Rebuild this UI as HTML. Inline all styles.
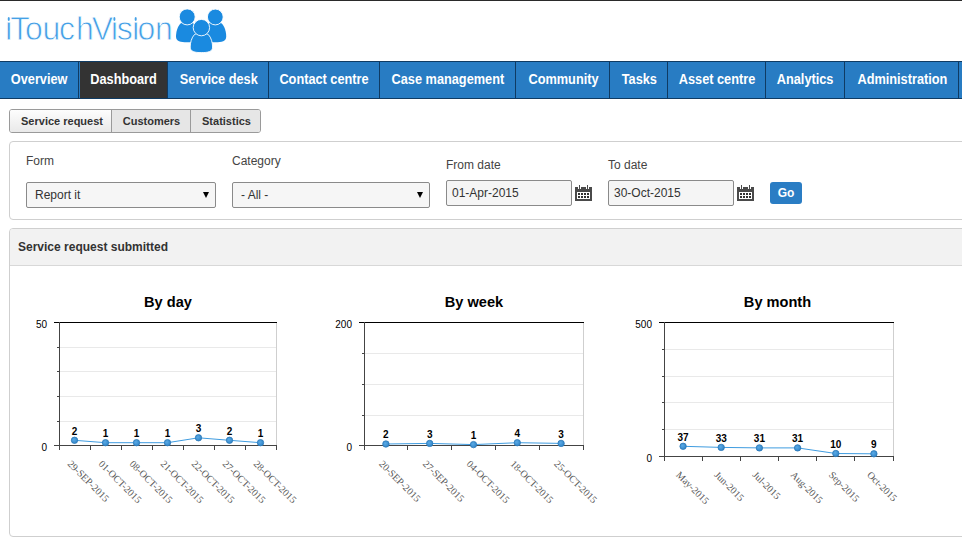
<!DOCTYPE html>
<html><head><meta charset="utf-8">
<style>
*{box-sizing:border-box;margin:0;padding:0}
html,body{width:962px;height:538px;overflow:hidden;background:#fff;font-family:"Liberation Sans",sans-serif;color:#333}
.abs{position:absolute}
#topline{left:0;top:0;width:962px;height:1px;background:#2a2a2a}
#nav{left:0;top:61px;width:962px;height:38px;background:#287cc3;border-top:1px solid #0f3b63;border-bottom:1px solid #0f3b63}
#nav .it{position:absolute;top:0;height:36px;line-height:35px;color:#fff;font-weight:bold;font-size:13px;text-align:center;border-right:1px solid #0f3b63;padding-left:1px}
#nav .act{background:#333}
#nav .it span{display:inline-block;font-size:14px;transform:scaleX(0.91);white-space:nowrap}
#tabs{left:9px;top:109px;width:252px;height:24px;border:1px solid #9a9a9a;border-radius:3px;overflow:hidden;font-size:11px;font-weight:bold;color:#333}
#tabs div{position:absolute;top:0;height:22px;line-height:22px;text-align:center;padding-left:1px}
#panel1{left:9px;top:141px;width:970px;height:79px;border:1px solid #cfcfcf;border-radius:4px}
.lbl{font-size:12px;color:#444}
.sel{height:26px;border:1px solid #8a8a8a;border-radius:2px;background:#f6f6f6;font-size:12px;color:#333;line-height:24px;padding-left:8px}
.arr{position:absolute;right:6px;top:9px;width:0;height:0;border-left:3.5px solid transparent;border-right:3.5px solid transparent;border-top:6px solid #000}
.inp{height:26px;border:1px solid #8a8a8a;border-radius:2px;background:#f5f5f5;font-size:12px;color:#333;line-height:24px;padding-left:5px}
#go{left:770px;top:182px;width:32px;height:22px;background:#2a7dc4;border-radius:3px;color:#fff;font-weight:bold;font-size:12px;line-height:23px;text-align:center}
#panel2{left:9px;top:228px;width:970px;height:309px;border:1px solid #cfcfcf;border-radius:4px;overflow:hidden}
#ph{left:0;top:0;width:100%;height:37px;background:#f2f2f2;border-bottom:1px solid #d8d8d8}
#pht{left:8px;top:11px;font-size:12px;font-weight:bold;color:#333;line-height:14px}
svg text{font-family:"Liberation Sans",sans-serif}
</style></head><body>
<div id="topline" class="abs"></div>
<svg class="abs" style="left:0;top:0" width="172" height="50"><text transform="translate(0,39.8) scale(1,1.045)" x="4.35 10.2 25.1 42.4 59.1 76.05 91.75 110.0 116.7 131.3 137.4 155" y="0" font-size="32" fill="#45a0e6" stroke="#fff" stroke-width="0.75" style="font-family:'Liberation Sans'">&#305;TouchV&#305;s&#305;on</text><g fill="#45a0e6"><ellipse cx="8.75" cy="19" rx="1.05" ry="2"/><ellipse cx="114.4" cy="19" rx="1.05" ry="2"/><ellipse cx="135.7" cy="19" rx="1.05" ry="2"/></g></svg>
<svg class="abs" style="left:170px;top:0" width="64" height="60" viewBox="170 0 64 60">
  <g fill="#1a8ae0" stroke="#fff" stroke-width="0.9">
    <path stroke="none" d="M180.5 23.5 Q187 20 193.5 23.5 C196.5 26.5 198.5 32 198.5 36 C198.5 41 194 42.2 187 42.2 C180.5 42.2 176 41.5 176 36.5 C176 32 177.5 26.5 180.5 23.5Z"/>
    <path stroke="none" d="M208.8 23.5 Q215.3 20 221.8 23.5 C224.8 26.5 226.2 32 226.2 36.5 C226.2 41.5 221.8 42.2 215.3 42.2 C208.5 42.2 204 41 204 36 C204 32 205.8 26.5 208.8 23.5Z"/>
    <circle cx="187.2" cy="16.9" r="8"/>
    <circle cx="215.3" cy="17" r="7.9"/>
    <path d="M194.5 34.5 Q201.4 30.5 208.3 34.5 C211.3 37.5 212.6 43 212.6 47 C212.6 51.8 208 52.6 201.4 52.6 C194.8 52.6 190.2 51.8 190.2 47 C190.2 43 191.5 37.5 194.5 34.5Z"/>
    <circle cx="201.4" cy="27.6" r="8.2"/>
  </g>
</svg>
<div id="nav" class="abs">
  <div class="it" style="left:0;width:79px"><span>Overview</span></div>
  <div class="it act" style="left:80px;width:88px"><span>Dashboard</span></div>
  <div class="it" style="left:168px;width:101px"><span>Service desk</span></div>
  <div class="it" style="left:269px;width:111px"><span>Contact centre</span></div>
  <div class="it" style="left:380px;width:136px"><span>Case management</span></div>
  <div class="it" style="left:516px;width:94px"><span>Community</span></div>
  <div class="it" style="left:610px;width:58px"><span>Tasks</span></div>
  <div class="it" style="left:668px;width:98px"><span>Asset centre</span></div>
  <div class="it" style="left:766px;width:79px"><span>Analytics</span></div>
  <div class="it" style="left:845px;width:114px"><span>Administration</span></div>
</div>
<div id="tabs" class="abs">
  <div style="left:0;width:102px;background:linear-gradient(#fdfdfd,#e9e9e9);border-right:1px solid #9a9a9a;padding-left:3px">Service request</div>
  <div style="left:102px;width:79px;background:#e6e6e6;border-right:1px solid #9a9a9a">Customers</div>
  <div style="left:181px;width:70px;background:#e6e6e6">Statistics</div>
</div>
<div id="panel1" class="abs"></div>
<div class="abs lbl" style="left:26px;top:154px">Form</div>
<div class="abs lbl" style="left:232px;top:154px">Category</div>
<div class="abs lbl" style="left:446px;top:158px">From date</div>
<div class="abs lbl" style="left:608px;top:158px">To date</div>
<div class="abs sel" style="left:26px;top:182px;width:190px">Report it<span class="arr"></span></div>
<div class="abs sel" style="left:232px;top:182px;width:198px">- All -<span class="arr"></span></div>
<div class="abs inp" style="left:446px;top:180px;width:126px">01-Apr-2015</div>
<div class="abs inp" style="left:608px;top:180px;width:126px">30-Oct-2015</div>
<svg class="abs" style="left:575px;top:184px" width="18" height="17" viewBox="0 0 18 17">
    <rect x="0" y="3" width="17" height="14" fill="#4a4a4a"/>
    <rect x="2" y="8" width="13" height="7" fill="#fff"/>
    <rect x="3" y="0" width="3" height="5" fill="#fff"/><rect x="4" y="1" width="1" height="4" fill="#4a4a4a"/>
    <rect x="11" y="0" width="3" height="5" fill="#fff"/><rect x="12" y="1" width="1" height="4" fill="#4a4a4a"/>
    <g fill="#333"><rect x="3" y="9" width="2" height="2"/><rect x="6" y="9" width="2" height="2"/><rect x="9" y="9" width="2" height="2"/><rect x="12" y="9" width="2" height="2"/>
    <rect x="3" y="12" width="2" height="2"/><rect x="6" y="12" width="2" height="2"/><rect x="9" y="12" width="2" height="2"/><rect x="12" y="12" width="2" height="2"/></g></svg>
<svg class="abs" style="left:737px;top:184px" width="18" height="17" viewBox="0 0 18 17">
    <rect x="0" y="3" width="17" height="14" fill="#4a4a4a"/>
    <rect x="2" y="8" width="13" height="7" fill="#fff"/>
    <rect x="3" y="0" width="3" height="5" fill="#fff"/><rect x="4" y="1" width="1" height="4" fill="#4a4a4a"/>
    <rect x="11" y="0" width="3" height="5" fill="#fff"/><rect x="12" y="1" width="1" height="4" fill="#4a4a4a"/>
    <g fill="#333"><rect x="3" y="9" width="2" height="2"/><rect x="6" y="9" width="2" height="2"/><rect x="9" y="9" width="2" height="2"/><rect x="12" y="9" width="2" height="2"/>
    <rect x="3" y="12" width="2" height="2"/><rect x="6" y="12" width="2" height="2"/><rect x="9" y="12" width="2" height="2"/><rect x="12" y="12" width="2" height="2"/></g></svg>

<div id="go" class="abs">Go</div>
<div id="panel2" class="abs">
  <div id="ph" class="abs"><div id="pht" class="abs">Service request submitted</div></div>
</div>
<svg id="charts" class="abs" style="left:0;top:0" width="962" height="538">
<defs><radialGradient id="pg" cx="0.4" cy="0.4" r="0.6"><stop offset="0" stop-color="#5aaae6"/><stop offset="1" stop-color="#3386c8"/></radialGradient></defs>
<text x="168.0" y="306.8" text-anchor="middle" font-size="14.6" font-weight="bold" fill="#000">By day</text>
<line x1="60" y1="347.5" x2="276" y2="347.5" stroke="#e9e9e9" stroke-width="1"/>
<line x1="57" y1="347.5" x2="59" y2="347.5" stroke="#444" stroke-width="1"/>
<line x1="60" y1="371.5" x2="276" y2="371.5" stroke="#e9e9e9" stroke-width="1"/>
<line x1="57" y1="371.5" x2="59" y2="371.5" stroke="#444" stroke-width="1"/>
<line x1="60" y1="396.5" x2="276" y2="396.5" stroke="#e9e9e9" stroke-width="1"/>
<line x1="57" y1="396.5" x2="59" y2="396.5" stroke="#444" stroke-width="1"/>
<line x1="60" y1="421.5" x2="276" y2="421.5" stroke="#e9e9e9" stroke-width="1"/>
<line x1="57" y1="421.5" x2="59" y2="421.5" stroke="#444" stroke-width="1"/>
<line x1="276.5" y1="323" x2="276.5" y2="445" stroke="#cfcfcf" stroke-width="1"/>
<line x1="54" y1="322.5" x2="277" y2="322.5" stroke="#000" stroke-width="1"/>
<line x1="59.5" y1="322" x2="59.5" y2="450" stroke="#444" stroke-width="1"/>
<line x1="54" y1="445.5" x2="277" y2="445.5" stroke="#444" stroke-width="1"/>
<line x1="90.5" y1="445" x2="90.5" y2="450" stroke="#444" stroke-width="1"/>
<line x1="121.5" y1="445" x2="121.5" y2="450" stroke="#444" stroke-width="1"/>
<line x1="152.5" y1="445" x2="152.5" y2="450" stroke="#444" stroke-width="1"/>
<line x1="183.5" y1="445" x2="183.5" y2="450" stroke="#444" stroke-width="1"/>
<line x1="214.5" y1="445" x2="214.5" y2="450" stroke="#444" stroke-width="1"/>
<line x1="245.5" y1="445" x2="245.5" y2="450" stroke="#444" stroke-width="1"/>
<line x1="276.5" y1="445" x2="276.5" y2="450" stroke="#444" stroke-width="1"/>
<text x="47" y="328" text-anchor="end" font-size="10" fill="#000">50</text>
<text x="47" y="450.5" text-anchor="end" font-size="10" fill="#000">0</text>
<polyline points="74.5,440.3 105.5,442.7 136.5,442.7 167.5,442.7 198.5,437.8 229.5,440.3 260.5,442.7" fill="none" stroke="#3f9ce0" stroke-width="1"/>
<circle cx="74.5" cy="440.3" r="3.2" fill="url(#pg)" stroke="#2c78b8" stroke-width="0.8"/>
<text x="74.5" y="434.7" text-anchor="middle" font-size="10" font-weight="bold" fill="#000">2</text>
<circle cx="105.5" cy="442.7" r="3.2" fill="url(#pg)" stroke="#2c78b8" stroke-width="0.8"/>
<text x="105.5" y="437.1" text-anchor="middle" font-size="10" font-weight="bold" fill="#000">1</text>
<circle cx="136.5" cy="442.7" r="3.2" fill="url(#pg)" stroke="#2c78b8" stroke-width="0.8"/>
<text x="136.5" y="437.1" text-anchor="middle" font-size="10" font-weight="bold" fill="#000">1</text>
<circle cx="167.5" cy="442.7" r="3.2" fill="url(#pg)" stroke="#2c78b8" stroke-width="0.8"/>
<text x="167.5" y="437.1" text-anchor="middle" font-size="10" font-weight="bold" fill="#000">1</text>
<circle cx="198.5" cy="437.8" r="3.2" fill="url(#pg)" stroke="#2c78b8" stroke-width="0.8"/>
<text x="198.5" y="432.2" text-anchor="middle" font-size="10" font-weight="bold" fill="#000">3</text>
<circle cx="229.5" cy="440.3" r="3.2" fill="url(#pg)" stroke="#2c78b8" stroke-width="0.8"/>
<text x="229.5" y="434.7" text-anchor="middle" font-size="10" font-weight="bold" fill="#000">2</text>
<circle cx="260.5" cy="442.7" r="3.2" fill="url(#pg)" stroke="#2c78b8" stroke-width="0.8"/>
<text x="260.5" y="437.1" text-anchor="middle" font-size="10" font-weight="bold" fill="#000">1</text>
<text transform="translate(67.0,464.4) rotate(45)" font-family="Liberation Serif" style="font-family:'Liberation Serif',serif" font-size="10" fill="#5a5a5a">29-SEP-2015</text>
<text transform="translate(98.0,464.4) rotate(45)" font-family="Liberation Serif" style="font-family:'Liberation Serif',serif" font-size="10" fill="#5a5a5a">01-OCT-2015</text>
<text transform="translate(129.0,464.4) rotate(45)" font-family="Liberation Serif" style="font-family:'Liberation Serif',serif" font-size="10" fill="#5a5a5a">08-OCT-2015</text>
<text transform="translate(160.0,464.4) rotate(45)" font-family="Liberation Serif" style="font-family:'Liberation Serif',serif" font-size="10" fill="#5a5a5a">21-OCT-2015</text>
<text transform="translate(191.0,464.4) rotate(45)" font-family="Liberation Serif" style="font-family:'Liberation Serif',serif" font-size="10" fill="#5a5a5a">22-OCT-2015</text>
<text transform="translate(222.0,464.4) rotate(45)" font-family="Liberation Serif" style="font-family:'Liberation Serif',serif" font-size="10" fill="#5a5a5a">27-OCT-2015</text>
<text transform="translate(253.0,464.4) rotate(45)" font-family="Liberation Serif" style="font-family:'Liberation Serif',serif" font-size="10" fill="#5a5a5a">28-OCT-2015</text>
<text x="474.0" y="306.8" text-anchor="middle" font-size="14.6" font-weight="bold" fill="#000">By week</text>
<line x1="365" y1="353.5" x2="583" y2="353.5" stroke="#e9e9e9" stroke-width="1"/>
<line x1="362" y1="353.5" x2="364" y2="353.5" stroke="#444" stroke-width="1"/>
<line x1="365" y1="384.5" x2="583" y2="384.5" stroke="#e9e9e9" stroke-width="1"/>
<line x1="362" y1="384.5" x2="364" y2="384.5" stroke="#444" stroke-width="1"/>
<line x1="365" y1="415.5" x2="583" y2="415.5" stroke="#e9e9e9" stroke-width="1"/>
<line x1="362" y1="415.5" x2="364" y2="415.5" stroke="#444" stroke-width="1"/>
<line x1="583.5" y1="323" x2="583.5" y2="445" stroke="#cfcfcf" stroke-width="1"/>
<line x1="359" y1="322.5" x2="584" y2="322.5" stroke="#000" stroke-width="1"/>
<line x1="364.5" y1="322" x2="364.5" y2="450" stroke="#444" stroke-width="1"/>
<line x1="359" y1="445.5" x2="584" y2="445.5" stroke="#444" stroke-width="1"/>
<line x1="407.5" y1="445" x2="407.5" y2="450" stroke="#444" stroke-width="1"/>
<line x1="451.5" y1="445" x2="451.5" y2="450" stroke="#444" stroke-width="1"/>
<line x1="495.5" y1="445" x2="495.5" y2="450" stroke="#444" stroke-width="1"/>
<line x1="539.5" y1="445" x2="539.5" y2="450" stroke="#444" stroke-width="1"/>
<line x1="583.5" y1="445" x2="583.5" y2="450" stroke="#444" stroke-width="1"/>
<text x="352" y="328" text-anchor="end" font-size="10" fill="#000">200</text>
<text x="352" y="450.5" text-anchor="end" font-size="10" fill="#000">0</text>
<polyline points="385.9,444.0 429.7,443.4 473.5,444.6 517.3,442.7 561.1,443.4" fill="none" stroke="#3f9ce0" stroke-width="1"/>
<circle cx="385.9" cy="444.0" r="3.2" fill="url(#pg)" stroke="#2c78b8" stroke-width="0.8"/>
<text x="385.9" y="438.4" text-anchor="middle" font-size="10" font-weight="bold" fill="#000">2</text>
<circle cx="429.7" cy="443.4" r="3.2" fill="url(#pg)" stroke="#2c78b8" stroke-width="0.8"/>
<text x="429.7" y="437.8" text-anchor="middle" font-size="10" font-weight="bold" fill="#000">3</text>
<circle cx="473.5" cy="444.6" r="3.2" fill="url(#pg)" stroke="#2c78b8" stroke-width="0.8"/>
<text x="473.5" y="439.0" text-anchor="middle" font-size="10" font-weight="bold" fill="#000">1</text>
<circle cx="517.3" cy="442.7" r="3.2" fill="url(#pg)" stroke="#2c78b8" stroke-width="0.8"/>
<text x="517.3" y="437.1" text-anchor="middle" font-size="10" font-weight="bold" fill="#000">4</text>
<circle cx="561.1" cy="443.4" r="3.2" fill="url(#pg)" stroke="#2c78b8" stroke-width="0.8"/>
<text x="561.1" y="437.8" text-anchor="middle" font-size="10" font-weight="bold" fill="#000">3</text>
<text transform="translate(378.4,464.4) rotate(45)" font-family="Liberation Serif" style="font-family:'Liberation Serif',serif" font-size="10" fill="#5a5a5a">20-SEP-2015</text>
<text transform="translate(422.2,464.4) rotate(45)" font-family="Liberation Serif" style="font-family:'Liberation Serif',serif" font-size="10" fill="#5a5a5a">27-SEP-2015</text>
<text transform="translate(466.0,464.4) rotate(45)" font-family="Liberation Serif" style="font-family:'Liberation Serif',serif" font-size="10" fill="#5a5a5a">04-OCT-2015</text>
<text transform="translate(509.8,464.4) rotate(45)" font-family="Liberation Serif" style="font-family:'Liberation Serif',serif" font-size="10" fill="#5a5a5a">18-OCT-2015</text>
<text transform="translate(553.6,464.4) rotate(45)" font-family="Liberation Serif" style="font-family:'Liberation Serif',serif" font-size="10" fill="#5a5a5a">25-OCT-2015</text>
<text x="777.5" y="306.8" text-anchor="middle" font-size="14.6" font-weight="bold" fill="#000">By month</text>
<line x1="665" y1="349.5" x2="893" y2="349.5" stroke="#e9e9e9" stroke-width="1"/>
<line x1="662" y1="349.5" x2="664" y2="349.5" stroke="#444" stroke-width="1"/>
<line x1="665" y1="376.5" x2="893" y2="376.5" stroke="#e9e9e9" stroke-width="1"/>
<line x1="662" y1="376.5" x2="664" y2="376.5" stroke="#444" stroke-width="1"/>
<line x1="665" y1="402.5" x2="893" y2="402.5" stroke="#e9e9e9" stroke-width="1"/>
<line x1="662" y1="402.5" x2="664" y2="402.5" stroke="#444" stroke-width="1"/>
<line x1="665" y1="429.5" x2="893" y2="429.5" stroke="#e9e9e9" stroke-width="1"/>
<line x1="662" y1="429.5" x2="664" y2="429.5" stroke="#444" stroke-width="1"/>
<line x1="893.5" y1="323" x2="893.5" y2="456" stroke="#cfcfcf" stroke-width="1"/>
<line x1="659" y1="322.5" x2="894" y2="322.5" stroke="#000" stroke-width="1"/>
<line x1="664.5" y1="322" x2="664.5" y2="461" stroke="#444" stroke-width="1"/>
<line x1="659" y1="456.5" x2="894" y2="456.5" stroke="#444" stroke-width="1"/>
<line x1="702.5" y1="456" x2="702.5" y2="461" stroke="#444" stroke-width="1"/>
<line x1="740.5" y1="456" x2="740.5" y2="461" stroke="#444" stroke-width="1"/>
<line x1="778.5" y1="456" x2="778.5" y2="461" stroke="#444" stroke-width="1"/>
<line x1="816.5" y1="456" x2="816.5" y2="461" stroke="#444" stroke-width="1"/>
<line x1="854.5" y1="456" x2="854.5" y2="461" stroke="#444" stroke-width="1"/>
<line x1="893.5" y1="456" x2="893.5" y2="461" stroke="#444" stroke-width="1"/>
<text x="652" y="328" text-anchor="end" font-size="10" fill="#000">500</text>
<text x="652" y="461.5" text-anchor="end" font-size="10" fill="#000">0</text>
<polyline points="683.1,446.3 721.2,447.4 759.4,447.9 797.6,447.9 835.8,453.5 873.9,453.8" fill="none" stroke="#3f9ce0" stroke-width="1"/>
<circle cx="683.1" cy="446.3" r="3.2" fill="url(#pg)" stroke="#2c78b8" stroke-width="0.8"/>
<text x="683.1" y="440.7" text-anchor="middle" font-size="10" font-weight="bold" fill="#000">37</text>
<circle cx="721.2" cy="447.4" r="3.2" fill="url(#pg)" stroke="#2c78b8" stroke-width="0.8"/>
<text x="721.2" y="441.8" text-anchor="middle" font-size="10" font-weight="bold" fill="#000">33</text>
<circle cx="759.4" cy="447.9" r="3.2" fill="url(#pg)" stroke="#2c78b8" stroke-width="0.8"/>
<text x="759.4" y="442.3" text-anchor="middle" font-size="10" font-weight="bold" fill="#000">31</text>
<circle cx="797.6" cy="447.9" r="3.2" fill="url(#pg)" stroke="#2c78b8" stroke-width="0.8"/>
<text x="797.6" y="442.3" text-anchor="middle" font-size="10" font-weight="bold" fill="#000">31</text>
<circle cx="835.8" cy="453.5" r="3.2" fill="url(#pg)" stroke="#2c78b8" stroke-width="0.8"/>
<text x="835.8" y="447.9" text-anchor="middle" font-size="10" font-weight="bold" fill="#000">10</text>
<circle cx="873.9" cy="453.8" r="3.2" fill="url(#pg)" stroke="#2c78b8" stroke-width="0.8"/>
<text x="873.9" y="448.2" text-anchor="middle" font-size="10" font-weight="bold" fill="#000">9</text>
<text transform="translate(675.6,475.4) rotate(45)" font-family="Liberation Serif" style="font-family:'Liberation Serif',serif" font-size="10" fill="#5a5a5a">May-2015</text>
<text transform="translate(713.8,475.4) rotate(45)" font-family="Liberation Serif" style="font-family:'Liberation Serif',serif" font-size="10" fill="#5a5a5a">Jun-2015</text>
<text transform="translate(751.9,475.4) rotate(45)" font-family="Liberation Serif" style="font-family:'Liberation Serif',serif" font-size="10" fill="#5a5a5a">Jul-2015</text>
<text transform="translate(790.1,475.4) rotate(45)" font-family="Liberation Serif" style="font-family:'Liberation Serif',serif" font-size="10" fill="#5a5a5a">Aug-2015</text>
<text transform="translate(828.2,475.4) rotate(45)" font-family="Liberation Serif" style="font-family:'Liberation Serif',serif" font-size="10" fill="#5a5a5a">Sep-2015</text>
<text transform="translate(866.4,475.4) rotate(45)" font-family="Liberation Serif" style="font-family:'Liberation Serif',serif" font-size="10" fill="#5a5a5a">Oct-2015</text>
</svg>
</body></html>
